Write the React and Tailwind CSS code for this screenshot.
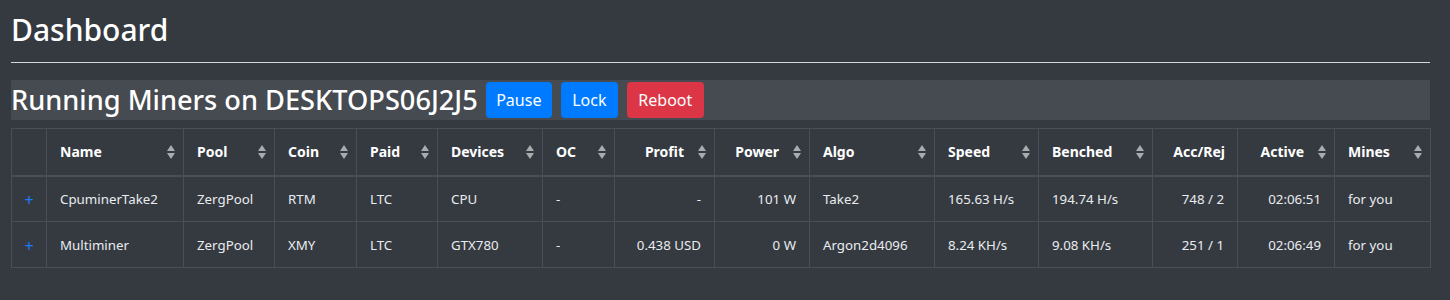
import React from "react";

const columns = [
  { key: "expand", label: "", w: "w-[35px]", sort: false },
  { key: "name", label: "Name", w: "w-[137px]", sort: true },
  { key: "pool", label: "Pool", w: "w-[91px]", sort: true },
  { key: "coin", label: "Coin", w: "w-[82px]", sort: true },
  { key: "paid", label: "Paid", w: "w-[81px]", sort: true },
  { key: "devices", label: "Devices", w: "w-[105px]", sort: true },
  { key: "oc", label: "OC", w: "w-[72px]", sort: true },
  { key: "profit", label: "Profit", w: "w-[100px]", sort: true, right: true },
  { key: "power", label: "Power", w: "w-[95px]", sort: true, right: true },
  { key: "algo", label: "Algo", w: "w-[125px]", sort: true },
  { key: "speed", label: "Speed", w: "w-[104px]", sort: true },
  { key: "benched", label: "Benched", w: "w-[114px]", sort: true },
  { key: "accrej", label: "Acc/Rej", w: "w-[85px]", sort: false, right: true },
  { key: "active", label: "Active", w: "w-[97px]", sort: true, right: true },
  { key: "mines", label: "Mines", w: "w-[96px]", sort: true },
];

const miners = [
  {
    name: "CpuminerTake2",
    pool: "ZergPool",
    coin: "RTM",
    paid: "LTC",
    devices: "CPU",
    oc: "-",
    profit: "-",
    power: "101 W",
    algo: "Take2",
    speed: "165.63 H/s",
    benched: "194.74 H/s",
    accrej: "748 / 2",
    active: "02:06:51",
    mines: "for you",
  },
  {
    name: "Multiminer",
    pool: "ZergPool",
    coin: "XMY",
    paid: "LTC",
    devices: "GTX780",
    oc: "-",
    profit: "0.438 USD",
    power: "0 W",
    algo: "Argon2d4096",
    speed: "8.24 KH/s",
    benched: "9.08 KH/s",
    accrej: "251 / 1",
    active: "02:06:49",
    mines: "for you",
  },
];

const SortIcon = () => (
  <svg
    width="8"
    height="15"
    viewBox="0 0 8 15"
    className="absolute right-[8px] top-1/2 -translate-y-1/2"
  >
    <polygon points="0,6.5 4,0.5 8,6.5" fill="#a9abae" />
    <polygon points="0,8.5 8,8.5 4,14.5" fill="#a9abae" />
  </svg>
);

const App = () => {
  return (
    <div
      className="min-h-[300px] bg-[#353a41] pl-[11px] pr-[20px] pb-8 text-[#e9ecef]"
      style={{ fontFamily: '"Noto Sans", "Open Sans", sans-serif' }}
    >
      <h1 className="pt-[11px] text-[30px] font-medium leading-[38px] text-white">
        Dashboard
      </h1>
      <hr className="mt-[13px] border-t border-[#d5d7d9]" />

      <div className="mt-[17px] flex h-[40px] items-center gap-[8px] bg-[#464a51]">
        <h2 className="text-[27.2px] font-medium leading-[40px] text-white">
          Running Miners on DESKTOPS06J2J5
        </h2>
        <div className="flex gap-[9px]">
          <button className="h-[36px] w-[66px] rounded-[4px] bg-[#007bff] text-[16px] text-white">
            Pause
          </button>
          <button className="h-[36px] w-[57px] rounded-[4px] bg-[#007bff] text-[16px] text-white">
            Lock
          </button>
          <button className="h-[36px] w-[77px] rounded-[4px] bg-[#dc3545] text-[16px] text-white">
            Reboot
          </button>
        </div>
      </div>

      <table className="mt-[8px] w-full table-fixed border-collapse text-[13.3px]">
        <colgroup>
          {columns.map((c) => (
            <col key={c.key} className={c.w} />
          ))}
        </colgroup>
        <thead>
          <tr className="h-[47px]">
            {columns.map((c) => (
              <th
                key={c.key}
                className={`relative border border-b-2 border-[#4a4f57] pl-[13px] text-[14px] font-bold text-white ${
                  c.right ? "text-right" : "text-left"
                } ${c.sort ? "pr-[30px]" : "pr-[12px]"}`}
              >
                {c.label}
                {c.sort && <SortIcon />}
              </th>
            ))}
          </tr>
        </thead>
        <tbody>
          {miners.map((m) => (
            <tr key={m.name} className="h-[46px]">
              {columns.map((c) =>
                c.key === "expand" ? (
                  <td
                    key={c.key}
                    className="border border-[#4a4f57] pt-[2px] text-center text-[16px] text-[#1a7bff]"
                  >
                    +
                  </td>
                ) : (
                  <td
                    key={c.key}
                    className={`border border-[#4a4f57] px-[13px] pt-[2px] ${
                      c.right ? "text-right" : "text-left"
                    }`}
                  >
                    {m[c.key]}
                  </td>
                )
              )}
            </tr>
          ))}
        </tbody>
      </table>
    </div>
  );
};

export default App;
